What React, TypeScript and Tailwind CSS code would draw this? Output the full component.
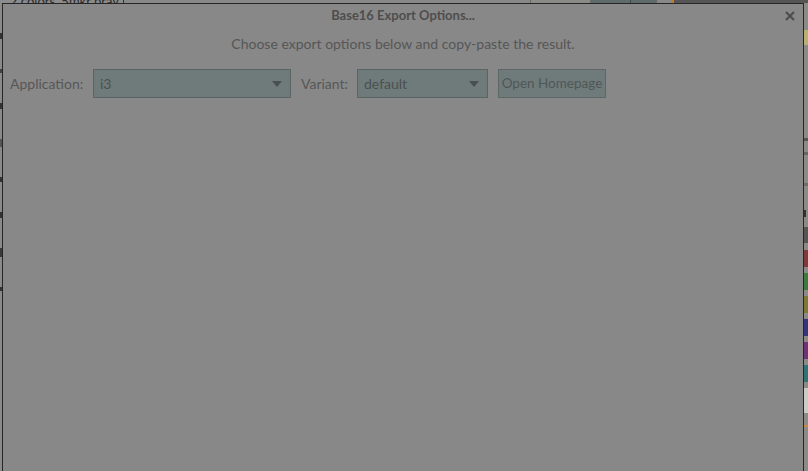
import React from 'react';

const font = { fontFamily: '"Lato", "Liberation Sans", sans-serif' };

function Caret() {
  return (
    <svg width="10" height="6" viewBox="0 0 10 6" className="shrink-0">
      <path d="M0 0 L10 0 L5 6 Z" fill="#4a4f4f" />
    </svg>
  );
}

function Select({ value, width }: { value: string; width: string }) {
  return (
    <div
      className={`flex h-[29px] ${width} items-center justify-between border border-[#596463] bg-[#6f7b7a] pl-[6px] pr-[8px] text-[14px] text-[#4a5150]`}
    >
      <span>{value}</span>
      <Caret />
    </div>
  );
}

// colored tag edges peeking out on the right of the window
const rightTags = ['#7e3a3a', '#3e7a3e', '#7c7a32', '#34347a', '#6e3278', '#2f7474'];

export default function App() {
  return (
    <div className="flex h-[471px] w-[808px] flex-col overflow-hidden bg-[#888888]" style={font}>
      {/* strip of the app behind the dialog */}
      <div className="flex h-[3px] shrink-0">
        <div className="w-[123px] overflow-hidden bg-[#8c8c8c] pl-[10px] text-[13px] leading-[3px] text-[#2a2a2a]">
          2 colors, 5mkr bray
        </div>
        <div className="w-[1px] bg-[#333]" />
        <div className="w-[406px] bg-[#888]" />
        <div className="w-[61px] border-x border-[#6a6a66] bg-[#8a8a86]" />
        <div className="w-[39px] bg-[#5f6a6a]" />
        <div className="w-[1px] bg-[#444]" />
        <div className="w-[26px] bg-[#5f6a6a]" />
        <div className="w-[15px] bg-[#888]" />
        <div className="w-[2px] bg-[#c07a2a]" />
        <div className="flex-1 bg-[#555]" />
      </div>

      <div className="flex min-h-0 flex-1">
        {/* left edge of the background window */}
        <div className="flex w-[2px] shrink-0 flex-col gap-[30px] bg-[#8a8a8a] pt-[30px]">
          <div className="h-[6px] bg-[#333]" />
          <div className="h-[4px] bg-[#444]" />
          <div className="h-[6px] bg-[#333]" />
          <div className="h-[8px] bg-[#555]" />
          <div className="h-[5px] bg-[#333]" />
          <div className="h-[6px] bg-[#333]" />
          <div className="h-[9px] bg-[#3a3a3a]" />
          <div className="h-[4px] bg-[#333]" />
        </div>

        {/* dialog */}
        <div className="flex w-[802px] shrink-0 flex-col border-l border-r border-t border-[#262626] bg-[#888888]">
          <div className="relative flex h-[24px] items-center justify-center">
            <span className="text-[13px] font-bold text-[#4e4e4e]">Base16 Export Options...</span>
            <svg
              width="10"
              height="10"
              viewBox="0 0 10 10"
              className="absolute right-[8px] top-[7px]"
            >
              <path d="M1 1 L9 9 M9 1 L1 9" stroke="#4e4e4e" strokeWidth="2.2" />
            </svg>
          </div>

          <div className="flex h-[31px] items-center justify-center text-[14px] text-[#565656]">
            Choose export options below and copy-paste the result.
          </div>

          <div className="mt-[10px] flex items-center pl-[7px] text-[14px] text-[#575757]">
            <span className="w-[73px]">Application:</span>
            <div className="ml-[10px]">
              <Select value="i3" width="w-[198px]" />
            </div>
            <span className="ml-[10px] w-[46px]">Variant:</span>
            <div className="ml-[10px]">
              <Select value="default" width="w-[131px]" />
            </div>
            <div className="ml-[10px] flex h-[29px] w-[108px] items-center justify-center border border-[#5d6766] bg-[#6f7b7a] text-[13.5px] text-[#4f5756]">
              Open Homepage
            </div>
          </div>
        </div>

        {/* right edge: background window with tags */}
        <div className="flex w-[4px] shrink-0 flex-col bg-[#8a8a86]">
          <div className="mt-[27px] h-[15px] bg-[#b8b070]" />
          <div className="mt-[93px] h-[3px] bg-[#555]" />
          <div className="mt-[11px] h-[3px] bg-[#666]" />
          <div className="mt-[28px] h-[3px] bg-[#776a66]" />
          <div className="mt-[24px] h-[7px] w-[2px] bg-[#333]" />
          <div className="mt-[10px] h-[16px] bg-[#555]" />
          <div className="mt-[7px] flex flex-col gap-[6px]">
            {rightTags.map((c) => (
              <div key={c} className="h-[17px]" style={{ backgroundColor: c }} />
            ))}
            <div className="h-[25px] bg-[#c8ccc4]" />
          </div>
          <div className="mt-[12px] h-[2px] bg-[#c88a3a]" />
        </div>
      </div>
    </div>
  );
}
